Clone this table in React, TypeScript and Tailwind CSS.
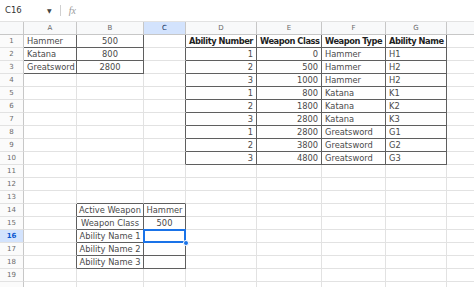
import { ReactNode } from "react";

type Align = "l" | "c" | "r";
type Cell = { t: string; a: Align; b?: boolean };

const LETTERS = ["A", "B", "C", "D", "E", "F", "G", "H"];
const ROWS = 20;

// ranges drawn with "all borders"
const ranges = [
  { r1: 1, r2: 3, c1: 0, c2: 1 },
  { r1: 1, r2: 10, c1: 3, c2: 6 },
  { r1: 14, r2: 18, c1: 1, c2: 2 },
];

const inRange = (r: number, c: number) =>
  ranges.some((g) => r >= g.r1 && r <= g.r2 && c >= g.c1 && c <= g.c2);

const weapons: [string, number][] = [
  ["Hammer", 500],
  ["Katana", 800],
  ["Greatsword", 2800],
];

const abilities: [number, number, string, string][] = [
  [1, 0, "Hammer", "H1"],
  [2, 500, "Hammer", "H2"],
  [3, 1000, "Hammer", "H2"],
  [1, 800, "Katana", "K1"],
  [2, 1800, "Katana", "K2"],
  [3, 2800, "Katana", "K3"],
  [1, 2800, "Greatsword", "G1"],
  [2, 3800, "Greatsword", "G2"],
  [3, 4800, "Greatsword", "G3"],
];

const cells: Record<string, Cell> = {};
const put = (r: number, c: number, t: string, a: Align, b = false) => {
  cells[`${r}-${c}`] = { t, a, b };
};

weapons.forEach(([name, cls], i) => {
  put(i + 1, 0, name, "l");
  put(i + 1, 1, String(cls), "c");
});

["Ability Number", "Weapon Class", "Weapon Type", "Ability Name"].forEach(
  (h, i) => put(1, 3 + i, h, "l", true)
);
abilities.forEach(([num, cls, type, name], i) => {
  put(i + 2, 3, String(num), "r");
  put(i + 2, 4, String(cls), "r");
  put(i + 2, 5, type, "l");
  put(i + 2, 6, name, "l");
});

put(14, 1, "Active Weapon", "c");
put(14, 2, "Hammer", "c");
put(15, 1, "Weapon Class", "c");
put(15, 2, "500", "c");
put(16, 1, "Ability Name 1", "c");
put(17, 1, "Ability Name 2", "c");
put(18, 1, "Ability Name 3", "c");

const SEL = { r: 16, c: 2 };

function GridCell({ r, c }: { r: number; c: number }) {
  const cell = cells[`${r}-${c}`];
  const right = inRange(r, c) || inRange(r, c + 1);
  const bottom = inRange(r, c) || inRange(r + 1, c);
  const align =
    cell?.a === "r"
      ? "justify-end"
      : cell?.a === "c"
        ? "justify-center"
        : "justify-start";
  let overlay: ReactNode = null;
  if (r === SEL.r && c === SEL.c) {
    overlay = (
      <>
        <div className="absolute -left-px -top-px right-[-1px] bottom-[-1px] border-2 border-[#1a73e8]" />
        <div className="absolute right-[-4px] bottom-[-4px] w-[6px] h-[6px] rounded-full bg-[#1a73e8] border border-white z-10" />
      </>
    );
  }
  return (
    <div
      className={`relative flex items-center px-[3px] whitespace-nowrap border-r border-b ${
        right ? "border-r-[#5f5f5f]" : "border-r-[#e2e2e2]"
      } ${bottom ? "border-b-[#5f5f5f]" : "border-b-[#e2e2e2]"} ${align}`}
    >
      {cell && (
        <span
          className={
            cell.b
              ? "font-bold text-[#1f1f1f] tracking-[-0.45px]"
              : "text-[#4a4a4a]"
          }
        >
          {cell.t}
        </span>
      )}
      {overlay}
    </div>
  );
}

export default function App() {
  return (
    <div className="w-[474px] h-[287px] overflow-hidden bg-white font-['DejaVu_Sans',sans-serif] text-[8.3px] leading-none">
      {/* name box + formula bar */}
      <div className="h-[22px] flex items-center border-b border-[#e2e2e2]">
        <span className="ml-[5px] w-[42px] text-[8.5px] text-[#333]">C16</span>
        <span className="text-[6px] text-[#444]">▼</span>
        <div className="ml-[8px] w-px h-[11px] bg-[#d0d0d0]" />
        <span className="ml-[8px] italic font-['Liberation_Serif',serif] text-[10px] text-[#9a9a9a]">
          fx
        </span>
      </div>

      <div className="grid w-max grid-cols-[24px_53px_67px_42px_71px_65px_64px_61px_100px] auto-rows-[13px]">
        {/* column headers; H runs off the right edge, so its letter isn't shown */}
        <div className="bg-[#f8f9fa] border-r border-b border-[#c7c7c7]" />
        {LETTERS.map((l, i) => (
          <div
            key={l}
            className={`flex items-center justify-center text-[7px] border-r border-b border-[#c7c7c7] ${
              i === SEL.c
                ? "bg-[#d3e3fd] text-[#0b2a5a]"
                : "bg-[#f8f9fa] text-[#6a6a6a]"
            }`}
          >
            {i < LETTERS.length - 1 ? l : ""}
          </div>
        ))}

        {Array.from({ length: ROWS }, (_, ri) => {
          const r = ri + 1;
          return [
            <div
              key={`h${r}`}
              className={`flex items-center justify-center text-[7px] border-r border-b border-r-[#c7c7c7] border-b-[#e2e2e2] ${
                r === SEL.r
                  ? "bg-[#d3e3fd] text-[#0b57d0] font-bold"
                  : "bg-[#fbfbfb] text-[#6a6a6a]"
              }`}
            >
              {/* last row only peeks in at the bottom edge */}
              {r < ROWS ? r : ""}
            </div>,
            ...LETTERS.map((_, c) => <GridCell key={`${r}-${c}`} r={r} c={c} />),
          ];
        })}
      </div>
    </div>
  );
}
